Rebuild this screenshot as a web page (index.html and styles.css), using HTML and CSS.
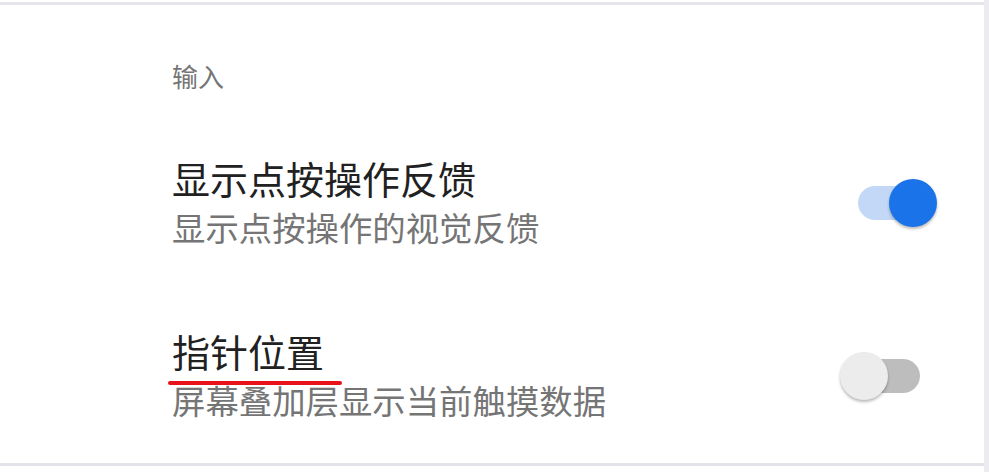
FILE: index.html
```html
<!DOCTYPE html>
<html lang="zh-CN">
<head>
<meta charset="utf-8">
<title>输入</title>
<link rel="stylesheet" href="styles.css">
</head>
<body>
<div class="screen">
  <div class="panel">
    <div class="card">
      <div class="category">输入</div>
      <div class="row">
        <div class="texts">
          <div class="title">显示点按操作反馈</div>
          <div class="summary">显示点按操作的视觉反馈</div>
        </div>
        <div class="switch on">
          <div class="track"></div>
          <div class="thumb"></div>
        </div>
      </div>
      <div class="row">
        <div class="texts">
          <div class="title marked">指针位置</div>
          <div class="summary">屏幕叠加层显示当前触摸数据</div>
        </div>
        <div class="switch">
          <div class="track"></div>
          <div class="thumb"></div>
        </div>
      </div>
    </div>
  </div>
  <div class="edge"></div>
</div>
</body>
</html>
```
FILE: styles.css
```css
html, body {
  margin: 0;
  padding: 0;
  background: #ffffff;
}
body {
  font-family: "Noto Sans CJK SC", "Noto Sans", sans-serif;
}
.screen {
  display: flex;
  width: 989px;
  height: 472px;
  overflow: hidden;
}
.panel {
  flex: 1;
  padding-top: 2px;
}
.card {
  border-top: 3px solid #e6e6ea;
  border-bottom: 3px solid #e2e2e8;
  height: 458px;
  box-sizing: content-box;
  display: flex;
  flex-direction: column;
}
.edge {
  width: 5px;
  background: #ececf0;
}
.category {
  margin-top: 56px;
  margin-bottom: 25px;
  padding-left: 172px;
  font-size: 26px;
  line-height: 30px;
  color: #757575;
}
.row {
  height: 173px;
  display: flex;
  align-items: center;
  justify-content: space-between;
  padding-left: 172px;
  padding-right: 47px;
}
.texts {
  display: flex;
  flex-direction: column;
  margin-top: -3px;
}
.title {
  font-size: 38px;
  line-height: 52px;
  color: #212121;
}
.summary {
  font-size: 33.4px;
  line-height: 46px;
  color: #757575;
}
.marked {
  position: relative;
}
.marked::after {
  content: "";
  position: absolute;
  left: -4px;
  top: 56px;
  width: 174px;
  height: 4px;
  border-radius: 2px;
  background: #e8121b;
}
.switch {
  display: grid;
  width: 97px;
  height: 48px;
  align-items: center;
}
.track, .thumb {
  grid-area: 1 / 1;
}
.track {
  margin-left: 18px;
  width: 62px;
  height: 34px;
  border-radius: 17px;
  background: #bdbdbd;
}
.thumb {
  width: 48px;
  height: 48px;
  border-radius: 50%;
  background: #ececec;
  box-shadow: 0 2px 3px rgba(0, 0, 0, 0.28);
  justify-self: start;
}
.switch.on .track {
  background: #c3d8f7;
}
.switch.on .thumb {
  background: #1a73e8;
  justify-self: end;
}
```
